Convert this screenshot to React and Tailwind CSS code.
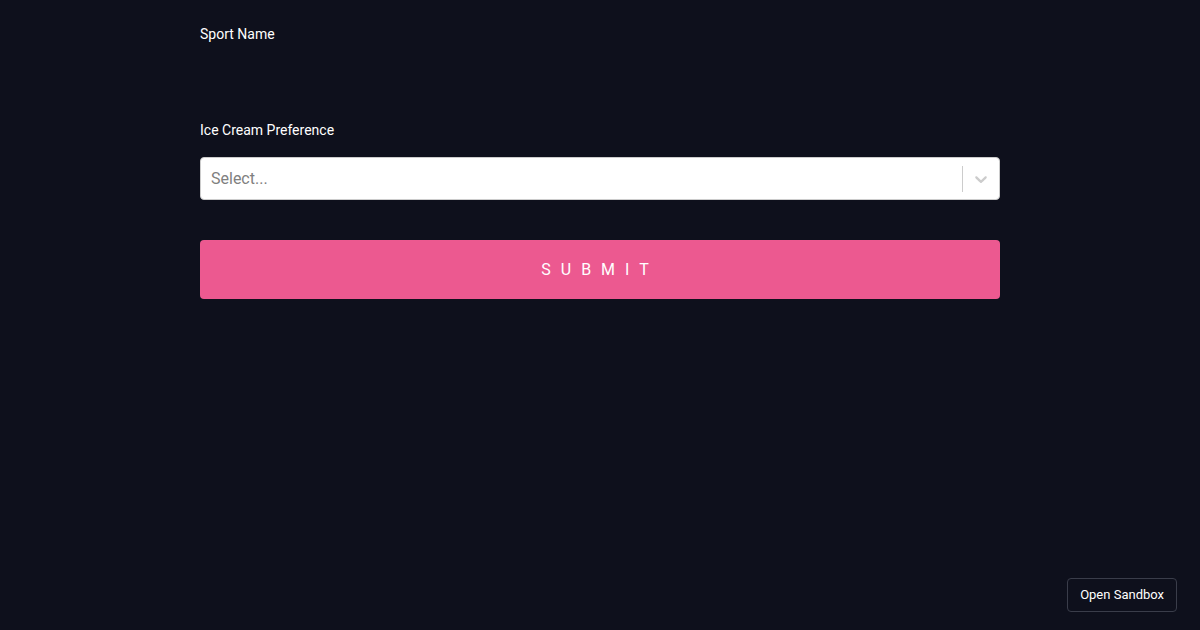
export default function App() {
  return (
    <div className="relative min-h-[630px] w-full bg-[#0e101c] font-['Roboto',sans-serif]">
      <form className="mx-auto w-[800px]" onSubmit={(e) => e.preventDefault()}>
        <label className="block pt-5 text-left text-[14px] font-normal leading-[28px] text-white">Sport Name</label>
        <div className="h-[68px]" />

        <label className="block text-left text-[14px] font-normal leading-[28px] text-white">Ice Cream Preference</label>
        <div className="mt-[13px] flex h-[43px] items-center rounded-[4px] border border-[#cccccc] bg-white">
          <div className="flex-1 px-[10px] text-[16px] text-[#808080]">Select...</div>
          <span className="h-[26px] w-px bg-[#cccccc]" />
          <div className="flex items-center p-2 text-[#cccccc]">
            <svg width="20" height="20" viewBox="0 0 20 20" fill="currentColor" aria-hidden="true">
              <path d="M4.516 7.548c0.436-0.446 1.043-0.481 1.576 0l3.908 3.747 3.908-3.747c0.533-0.481 1.141-0.446 1.574 0 0.436 0.445 0.408 1.197 0 1.615-0.406 0.418-4.695 4.502-4.695 4.502-0.217 0.223-0.502 0.335-0.787 0.335s-0.57-0.112-0.789-0.335c0 0-4.287-4.084-4.695-4.502s-0.436-1.17 0-1.615z" />
            </svg>
          </div>
        </div>

        <button
          type="submit"
          className="mt-10 block w-full rounded-[4px] bg-[#ec5990] p-5 text-[16px] font-normal uppercase leading-[19px] tracking-[10px] text-white"
        >
          Submit
        </button>
      </form>

      <button className="absolute bottom-[18px] right-[23px] h-[34px] rounded-[4px] border border-[#3a3d4a] bg-[#0e101c] px-[12px] font-['Roboto',sans-serif] text-[13px] text-white">
        Open Sandbox
      </button>
    </div>
  );
}
